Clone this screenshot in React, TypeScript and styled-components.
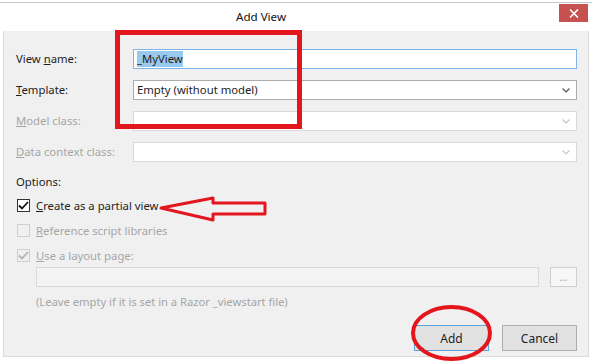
import styled, { createGlobalStyle } from "styled-components"

const Global = createGlobalStyle`
  html, body {
    margin: 0;
    padding: 0;
    background: #fff;
  }
  body {
    font-family: "Noto Sans", "Open Sans", sans-serif;
    font-size: 11.3px;
    color: #1e1e1e;
  }
`

const Screen = styled.div`
  position: relative;
  width: 592px;
  height: 363px;
  overflow: hidden;
  background: #fff;
`
const Window = styled.div`
  margin-top: 2px;
  border-top: 1px solid #c9c9c9;
  display: flex;
  flex-direction: column;
`
const TitleBar = styled.div`
  display: flex;
  align-items: flex-start;
  height: 28px;
  background: #fff;
`
const Title = styled.div`
  flex: 1;
  text-align: center;
  padding-right: 37px;
  line-height: 28px;
  font-size: 11.6px;
  color: #111;
`
const CloseButton = styled.div`
  width: 29px;
  height: 18px;
  margin-top: 1px;
  margin-right: 4px;
  background: #c75050;
  display: flex;
  align-items: center;
  justify-content: center;
`
const Panel = styled.div`
  margin: 0 3px 0 3px;
  height: 326px;
  box-sizing: border-box;
  background: #f0f0f0;
  border: 1px solid #dcdcdc;
  border-top: none;
  padding: 18px 11px 0 12px;
  display: flex;
  flex-direction: column;
`
const FieldGrid = styled.div`
  display: grid;
  grid-template-columns: 117px 1fr;
  grid-auto-rows: 20px;
  row-gap: 11px;
  align-items: center;
`
const Label = styled.div<{ $disabled?: boolean }>`
  color: ${p => (p.$disabled ? "#a6a6a6" : "#1e1e1e")};
  line-height: 16px;
`
const TextBox = styled.div<{ $focused?: boolean; $disabled?: boolean }>`
  height: 20px;
  box-sizing: border-box;
  border: 1px solid ${p => (p.$focused ? "#7eb4ea" : p.$disabled ? "#d9d9d9" : "#acacac")};
  background: ${p => (p.$disabled ? "#f3f3f3" : "#fff")};
  padding: 0 3px;
  display: flex;
  align-items: center;
  line-height: 16px;
  color: #1e1e1e;
`
const Selected = styled.span`
  background: #99c9ef;
  color: #1e1e1e;
`
const SelectBox = styled(TextBox)`
  justify-content: space-between;
  padding-right: 6px;
  background: #fff;
`
const SectionLabel = styled.div`
  margin-top: 12px;
  line-height: 16px;
`
const CheckList = styled.div`
  margin-top: 7px;
  display: flex;
  flex-direction: column;
  gap: 9px;
`
const CheckRow = styled.div<{ $disabled?: boolean }>`
  display: flex;
  align-items: center;
  height: 16px;
  padding-left: 1px;
  gap: 6px;
  color: ${p => (p.$disabled ? "#a6a6a6" : "#1e1e1e")};
`
const Box = styled.div<{ $disabled?: boolean }>`
  width: 13px;
  height: 13px;
  box-sizing: border-box;
  border: 1px solid ${p => (p.$disabled ? "#cfcfcf" : "#333")};
  background: ${p => (p.$disabled ? "#f0f0f0" : "#fff")};
  display: flex;
  align-items: center;
  justify-content: center;
`
const LayoutRow = styled.div`
  margin-top: 4px;
  padding-left: 20px;
  display: flex;
  gap: 11px;
`
const LayoutInput = styled(TextBox)`
  flex: 1;
`
const BrowseButton = styled.div`
  width: 27px;
  height: 20px;
  box-sizing: border-box;
  border: 1px solid #cfcfcf;
  background: #f7f7f7;
  color: #a0a0a0;
  font-size: 10px;
  display: flex;
  align-items: center;
  justify-content: center;
`
const Hint = styled.div`
  margin-top: 7px;
  padding-left: 20px;
  line-height: 16px;
  letter-spacing: -0.05px;
  color: #a6a6a6;
`
const ButtonRow = styled.div`
  margin-top: 15px;
  display: flex;
  justify-content: flex-end;
  gap: 13px;
`
const DialogButton = styled.div<{ $default?: boolean }>`
  width: 75px;
  height: 26px;
  box-sizing: border-box;
  border: 1px solid ${p => (p.$default ? "#5aa3e0" : "#adadad")};
  background: #e1e1e1;
  display: flex;
  align-items: center;
  justify-content: center;
  font-size: 12px;
  color: #1e1e1e;
`
const RedBox = styled.div`
  position: absolute;
  left: 115px;
  top: 30px;
  width: 187px;
  height: 99px;
  box-sizing: border-box;
  border: 5px solid #e3161e;
`
const Overlay = styled.svg`
  position: absolute;
  left: 0;
  top: 0;
  pointer-events: none;
`

const Chevron = ({ disabled }: { disabled?: boolean }) => (
  <svg width="8" height="5" viewBox="0 0 8 5">
    <polyline points="0.5,0.5 4,4 7.5,0.5" fill="none" stroke={disabled ? "#c4c4c4" : "#555"} strokeWidth="1.2" />
  </svg>
)

const Check = ({ color }: { color: string }) => (
  <svg width="11" height="9" viewBox="0 0 11 9">
    <polyline points="1,4.5 4,7.5 10,1" fill="none" stroke={color} strokeWidth="1.8" />
  </svg>
)

const App = () => {
  return (
    <Screen>
      <Global />
      <Window>
        <TitleBar>
          <Title>Add View</Title>
          <CloseButton>
            <svg width="10" height="9" viewBox="0 0 10 9">
              <path d="M1 0.5 L9 8.5 M9 0.5 L1 8.5" stroke="#fff" strokeWidth="1.6" />
            </svg>
          </CloseButton>
        </TitleBar>
        <Panel>
          <FieldGrid>
            <Label>View <u>n</u>ame:</Label>
            <TextBox $focused><Selected>_MyView</Selected></TextBox>
            <Label><u>T</u>emplate:</Label>
            <SelectBox>Empty (without model)<Chevron /></SelectBox>
            <Label $disabled><u>M</u>odel class:</Label>
            <SelectBox $disabled><span /><Chevron disabled /></SelectBox>
            <Label $disabled><u>D</u>ata context class:</Label>
            <SelectBox $disabled><span /><Chevron disabled /></SelectBox>
          </FieldGrid>
          <SectionLabel>Options:</SectionLabel>
          <CheckList>
            <CheckRow>
              <Box><Check color="#111" /></Box>
              <span><u>C</u>reate as a partial view</span>
            </CheckRow>
            <CheckRow $disabled>
              <Box $disabled />
              <span><u>R</u>eference script libraries</span>
            </CheckRow>
            <CheckRow $disabled>
              <Box $disabled><Check color="#b4b4b4" /></Box>
              <span><u>U</u>se a layout page:</span>
            </CheckRow>
          </CheckList>
          <LayoutRow>
            <LayoutInput $disabled />
            <BrowseButton>...</BrowseButton>
          </LayoutRow>
          <Hint>(Leave empty if it is set in a Razor _viewstart file)</Hint>
          <ButtonRow>
            <DialogButton $default>Add</DialogButton>
            <DialogButton>Cancel</DialogButton>
          </ButtonRow>
        </Panel>
      </Window>
      <RedBox />
      <Overlay width="592" height="363" viewBox="0 0 592 363">
        <polygon
          points="161,208 213,198 213,203 265,203 265,214 213,214 213,220"
          fill="none"
          stroke="#e3161e"
          strokeWidth="3"
          strokeLinejoin="round"
        />
        <ellipse cx="451.5" cy="333" rx="38.5" ry="26" fill="none" stroke="#e3161e" strokeWidth="4" />
      </Overlay>
    </Screen>
  )
}
export default App
